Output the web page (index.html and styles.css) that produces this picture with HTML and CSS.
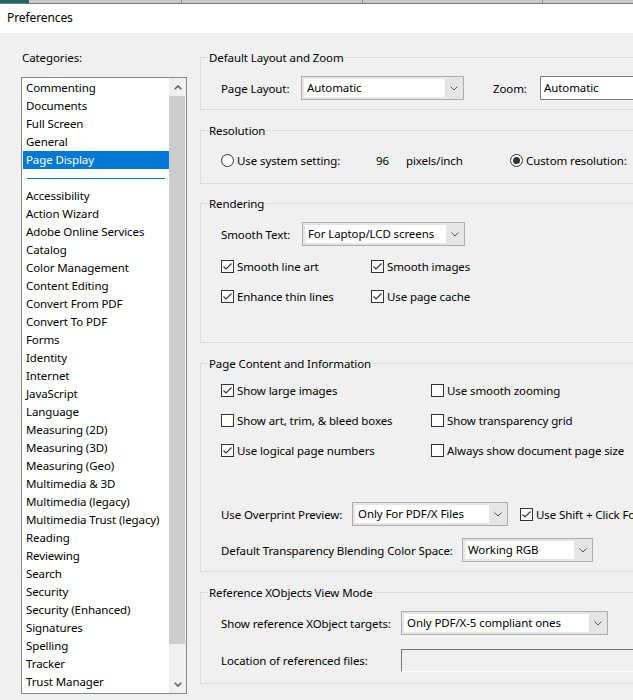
FILE: index.html
```html
<!DOCTYPE html>
<html>
<head>
<meta charset="utf-8">
<title>Preferences</title>
<link rel="stylesheet" href="styles.css">
</head>
<body>
<div class="strip">
  <div class="strip-teal"></div>
  <div class="strip-seg s1"></div>
  <div class="strip-seg s2"></div>
  <div class="strip-seg s3"></div>
  <div class="strip-seg s4"></div>
</div>
<div class="titlebar">Preferences</div>
<div class="main">
  <div class="sidebar">
    <div class="cat-label">Categories:</div>
    <div class="listbox">
      <ul class="items">
        <li>Commenting</li>
        <li>Documents</li>
        <li>Full Screen</li>
        <li>General</li>
        <li class="selected">Page Display</li>
        <li class="sep"><span></span></li>
        <li>Accessibility</li>
        <li>Action Wizard</li>
        <li>Adobe Online Services</li>
        <li>Catalog</li>
        <li>Color Management</li>
        <li>Content Editing</li>
        <li>Convert From PDF</li>
        <li>Convert To PDF</li>
        <li>Forms</li>
        <li>Identity</li>
        <li>Internet</li>
        <li>JavaScript</li>
        <li>Language</li>
        <li>Measuring (2D)</li>
        <li>Measuring (3D)</li>
        <li>Measuring (Geo)</li>
        <li>Multimedia &amp; 3D</li>
        <li>Multimedia (legacy)</li>
        <li>Multimedia Trust (legacy)</li>
        <li>Reading</li>
        <li>Reviewing</li>
        <li>Search</li>
        <li>Security</li>
        <li>Security (Enhanced)</li>
        <li>Signatures</li>
        <li>Spelling</li>
        <li>Tracker</li>
        <li>Trust Manager</li>
      </ul>
      <div class="scrollbar">
        <div class="sb-btn up"><svg width="8" height="5" viewBox="0 0 8 5"><polyline points="0.7,4.3 4,1 7.3,4.3" fill="none" stroke="#606060" stroke-width="1.6"/></svg></div>
        <div class="sb-thumb"></div>
        <div class="sb-track"></div>
        <div class="sb-btn down"><svg width="8" height="5" viewBox="0 0 8 5"><polyline points="0.7,0.7 4,4 7.3,0.7" fill="none" stroke="#606060" stroke-width="1.6"/></svg></div>
      </div>
    </div>
  </div>

  <div class="panel">
    <!-- Default Layout and Zoom -->
    <div class="group g-layout">
      <span class="group-title">Default Layout and Zoom</span>
      <div class="row">
        <span class="lbl w-pagelayout">Page Layout:</span>
        <div class="select w-sel-layout"><span class="value">Automatic</span><span class="arrow"><svg width="8" height="5" viewBox="0 0 8 5"><polyline points="0.5,0.5 4,4 7.5,0.5" fill="none" stroke="#5a5a5a" stroke-width="1"/></svg></span></div>
        <span class="lbl w-zoom">Zoom:</span>
        <div class="editbox">Automatic</div>
      </div>
    </div>

    <!-- Resolution -->
    <div class="group g-res">
      <span class="group-title">Resolution</span>
      <div class="row">
        <span class="radio"></span>
        <span class="lbl w-sys">Use system setting:</span>
        <span class="lbl w-96">96</span>
        <span class="lbl w-ppi">pixels/inch</span>
        <span class="radio on"></span>
        <span class="lbl">Custom resolution:</span>
      </div>
    </div>

    <!-- Rendering -->
    <div class="group g-render">
      <span class="group-title">Rendering</span>
      <div class="row">
        <span class="lbl w-smooth">Smooth Text:</span>
        <div class="select w-sel-smooth"><span class="value">For Laptop/LCD screens</span><span class="arrow"><svg width="8" height="5" viewBox="0 0 8 5"><polyline points="0.5,0.5 4,4 7.5,0.5" fill="none" stroke="#5a5a5a" stroke-width="1"/></svg></span></div>
      </div>
      <div class="checks render-checks">
        <label class="check"><span class="box on"><svg width="11" height="11" viewBox="0 0 11 11"><polyline points="1.5,5.5 4,8 9.5,2.5" fill="none" stroke="#333" stroke-width="1.1"/></svg></span>Smooth line art</label>
        <label class="check"><span class="box on"><svg width="11" height="11" viewBox="0 0 11 11"><polyline points="1.5,5.5 4,8 9.5,2.5" fill="none" stroke="#333" stroke-width="1.1"/></svg></span>Smooth images</label>
        <label class="check"><span class="box on"><svg width="11" height="11" viewBox="0 0 11 11"><polyline points="1.5,5.5 4,8 9.5,2.5" fill="none" stroke="#333" stroke-width="1.1"/></svg></span>Enhance thin lines</label>
        <label class="check"><span class="box on"><svg width="11" height="11" viewBox="0 0 11 11"><polyline points="1.5,5.5 4,8 9.5,2.5" fill="none" stroke="#333" stroke-width="1.1"/></svg></span>Use page cache</label>
      </div>
    </div>

    <!-- Page Content and Information -->
    <div class="group g-content">
      <span class="group-title">Page Content and Information</span>
      <div class="checks content-checks">
        <label class="check"><span class="box on"><svg width="11" height="11" viewBox="0 0 11 11"><polyline points="1.5,5.5 4,8 9.5,2.5" fill="none" stroke="#333" stroke-width="1.1"/></svg></span>Show large images</label>
        <label class="check"><span class="box"></span>Use smooth zooming</label>
        <label class="check"><span class="box"></span>Show art, trim, &amp; bleed boxes</label>
        <label class="check"><span class="box"></span>Show transparency grid</label>
        <label class="check"><span class="box on"><svg width="11" height="11" viewBox="0 0 11 11"><polyline points="1.5,5.5 4,8 9.5,2.5" fill="none" stroke="#333" stroke-width="1.1"/></svg></span>Use logical page numbers</label>
        <label class="check"><span class="box"></span>Always show document page size</label>
      </div>
      <div class="row overprint-row">
        <span class="lbl w-overprint">Use Overprint Preview:</span>
        <div class="select w-sel-overprint"><span class="value">Only For PDF/X Files</span><span class="arrow"><svg width="8" height="5" viewBox="0 0 8 5"><polyline points="0.5,0.5 4,4 7.5,0.5" fill="none" stroke="#5a5a5a" stroke-width="1"/></svg></span></div>
        <label class="check shift-check"><span class="box on"><svg width="11" height="11" viewBox="0 0 11 11"><polyline points="1.5,5.5 4,8 9.5,2.5" fill="none" stroke="#333" stroke-width="1.1"/></svg></span>Use Shift + Click Fo</label>
      </div>
      <div class="row blend-row">
        <span class="lbl w-blend">Default Transparency Blending Color Space:</span>
        <div class="select w-sel-blend"><span class="value">Working RGB</span><span class="arrow"><svg width="8" height="5" viewBox="0 0 8 5"><polyline points="0.5,0.5 4,4 7.5,0.5" fill="none" stroke="#5a5a5a" stroke-width="1"/></svg></span></div>
      </div>
    </div>

    <!-- Reference XObjects View Mode -->
    <div class="group g-xobj">
      <span class="group-title">Reference XObjects View Mode</span>
      <div class="row">
        <span class="lbl w-xobj">Show reference XObject targets:</span>
        <div class="select w-sel-xobj"><span class="value">Only PDF/X-5 compliant ones</span><span class="arrow"><svg width="8" height="5" viewBox="0 0 8 5"><polyline points="0.5,0.5 4,4 7.5,0.5" fill="none" stroke="#5a5a5a" stroke-width="1"/></svg></span></div>
      </div>
      <div class="row loc-row">
        <span class="lbl w-xobj">Location of referenced files:</span>
        <div class="disabled-field"></div>
      </div>
    </div>
  </div>
</div>
</body>
</html>
```

FILE: styles.css
```css
html, body {
  margin: 0;
  padding: 0;
  width: 633px;
  height: 700px;
  overflow: hidden;
}
body {
  font-family: "Noto Sans", "Liberation Sans", sans-serif;
  font-size: 11.5px;
  letter-spacing: -0.1px;
  color: #000;
  background: #f0f0f0;
}

/* top strip (window behind) */
.strip {
  display: flex;
  height: 3px;
  border-bottom: 1px solid #777;
  background: #c9c9c9;
}
.strip-teal { width: 29px; background: #1d6a65; }
.strip-seg { background: #cacaca; }
.s1 { width: 152px; }
.s2 { width: 180px; border-left: 1px solid #8a8a8a; }
.s3 { width: 179px; border-left: 1px solid #8a8a8a; }
.s4 { flex: 1; border-left: 1px solid #8a8a8a; }

.titlebar {
  height: 29px;
  line-height: 28px;
  background: #fff;
  padding-left: 7px;
  font-size: 12px;
}

.main {
  display: flex;
  height: 667px;
  background: #f0f0f0;
}

/* sidebar */
.sidebar {
  width: 179px;
  flex-shrink: 0;
  padding-left: 21px;
  padding-top: 17px;
}
.cat-label {
  line-height: 16px;
  height: 16px;
  padding-left: 1px;
  margin-bottom: 11px;
}
.listbox {
  width: 166px;
  height: 617px;
  box-sizing: border-box;
  border: 1px solid #828790;
  background: #fff;
  display: flex;
}
.items {
  list-style: none;
  margin: 0;
  padding: 1px 0 0 1px;
  flex: 1;
  overflow: hidden;
}
.items li {
  height: 18px;
  line-height: 18px;
  padding-left: 3px;
  white-space: nowrap;
}
.items li.selected {
  background: #0078d7;
  color: #fff;
}
.items li.sep {
  display: flex;
  align-items: center;
  padding: 0 4px;
}
.items li.sep span {
  display: block;
  flex: 1;
  height: 1px;
  background: #0078d7;
}
.scrollbar {
  width: 17px;
  flex-shrink: 0;
  background: #f0f0f0;
  display: flex;
  flex-direction: column;
}
.sb-btn {
  height: 17px;
  display: flex;
  align-items: center;
  justify-content: center;
}
.sb-btn.up { height: 18px; }
.sb-thumb {
  height: 548px;
  margin-right: 1px;
  background: #cdcdcd;
}
.sb-track { flex: 1; }

/* right panel */
.panel {
  flex: 1;
  overflow: hidden;
  padding-top: 24px;
}
.group {
  position: relative;
  width: 600px;
  box-sizing: border-box;
  border: 1px solid #dcdcdc;
  padding-left: 20px;
}
.group-title {
  position: absolute;
  top: -8px;
  left: 7px;
  padding: 0 1px;
  line-height: 16px;
  background: #f0f0f0;
  white-space: nowrap;
}
.g-layout { height: 53px; padding-top: 18px; }
.g-res { height: 54px; margin-top: 20px; padding-top: 17px; }
.g-render { height: 140px; margin-top: 19px; padding-top: 18px; }
.g-content { height: 209px; margin-top: 20px; padding-top: 11px; }
.g-xobj { height: 92px; margin-top: 20px; padding-top: 18px; }

.row {
  display: flex;
  align-items: center;
  height: 24px;
  white-space: nowrap;
}
.lbl { flex-shrink: 0; white-space: nowrap; }
.w-pagelayout { width: 80px; }
.w-zoom { width: 47px; margin-left: 29px; }
.w-sys { width: 139px; }
.w-96 { width: 30px; }
.w-ppi { width: 104px; }
.w-smooth { width: 81px; }
.w-overprint { width: 131px; }
.w-blend { width: 241px; }
.w-xobj { width: 180px; }

.select {
  display: flex;
  flex-shrink: 0;
  box-sizing: border-box;
  height: 24px;
  border: 1px solid #adadad;
  background: #e5e5e5;
  padding: 2px 0 2px 2px;
}
.select .value {
  flex: 1;
  background: #fff;
  line-height: 18px;
  padding-left: 3px;
  overflow: hidden;
}
.select .arrow {
  width: 18px;
  display: flex;
  align-items: center;
  justify-content: center;
}
.w-sel-layout { width: 163px; }
.w-sel-smooth { width: 163px; }
.w-sel-overprint { width: 156px; }
.w-sel-blend { width: 131px; }
.w-sel-xobj { width: 207px; }

.editbox {
  flex-shrink: 0;
  box-sizing: border-box;
  width: 200px;
  height: 24px;
  border: 1px solid #7a7a7a;
  background: #fff;
  line-height: 22px;
  padding-left: 3px;
}

.radio {
  flex-shrink: 0;
  width: 13px;
  height: 13px;
  box-sizing: border-box;
  border: 1px solid #333;
  border-radius: 50%;
  background: #fff;
  margin-right: 3px;
  display: flex;
  align-items: center;
  justify-content: center;
}
.radio.on::after {
  content: "";
  width: 7px;
  height: 7px;
  border-radius: 50%;
  background: #333;
}

.checks {
  display: grid;
  grid-auto-rows: 30px;
}
.render-checks {
  grid-template-columns: 150px auto;
  margin-top: 5px;
}
.content-checks {
  grid-template-columns: 210px auto;
}
.check {
  display: flex;
  align-items: center;
  white-space: nowrap;
}
.box {
  flex-shrink: 0;
  width: 13px;
  height: 13px;
  box-sizing: border-box;
  border: 1px solid #333;
  background: #fff;
  margin-right: 3px;
  display: flex;
  align-items: center;
  justify-content: center;
}
.overprint-row { margin-top: 37px; }
.shift-check { margin-left: 12px; }
.blend-row { margin-top: 12px; }
.loc-row { margin-top: 14px; height: 23px; }

.disabled-field {
  flex-shrink: 0;
  width: 300px;
  height: 23px;
  box-sizing: border-box;
  border-top: 1px solid #767676;
  border-left: 1px solid #767676;
  border-bottom: 1px solid #fdfdfd;
  background: #f0f0f0;
}
```
